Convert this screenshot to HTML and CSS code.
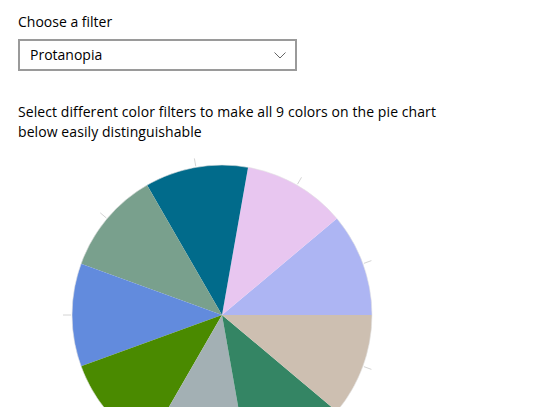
FILE: index.html
```html
<!DOCTYPE html>
<html lang="en">
<head>
<meta charset="utf-8">
<title>Color filters</title>
<link rel="stylesheet" href="styles.css">
</head>
<body>
<main class="page">
  <p class="label">Choose a filter</p>
  <div class="dropdown" role="combobox" aria-expanded="false">
    <span class="dropdown-value">Protanopia</span>
    <svg class="chevron" width="12" height="7" viewBox="0 0 12 7" aria-hidden="true">
      <polyline points="0.5,0.5 6,6 11.5,0.5" fill="none" stroke="#666" stroke-width="1"/>
    </svg>
  </div>
  <p class="desc">Select different color filters to make all 9 colors on the pie chart below easily distinguishable</p>
  <svg class="chart" width="320" height="320" viewBox="0 0 320 320" aria-label="Pie chart with 9 colors">
    <g class="ticks" stroke="#d4d4d4" stroke-width="1">
      <line x1="301.893" y1="108.355" x2="309.411" y2="105.619"/>
      <line x1="235.5" y1="29.229" x2="239.5" y2="22.301"/>
      <line x1="133.779" y1="11.294" x2="132.390" y2="3.415"/>
      <line x1="44.328" y1="62.939" x2="38.200" y2="57.796"/>
      <line x1="9" y1="160" x2="1" y2="160"/>
      <line x1="44.328" y1="257.061" x2="38.200" y2="262.204"/>
      <line x1="133.779" y1="308.706" x2="132.390" y2="316.585"/>
      <line x1="235.5" y1="290.771" x2="239.5" y2="297.699"/>
      <line x1="301.893" y1="211.645" x2="309.411" y2="214.381"/>
    </g>
    <g class="slices">
      <path fill="#adb5f3" d="M160,160 L310,160 A150,150 0 0 0 274.907,63.582 Z"/>
      <path fill="#e8c6f0" d="M160,160 L274.907,63.582 A150,150 0 0 0 186.047,12.279 Z"/>
      <path fill="#016b8b" d="M160,160 L186.047,12.279 A150,150 0 0 0 85,30.096 Z"/>
      <path fill="#79a08d" d="M160,160 L85,30.096 A150,150 0 0 0 19.046,108.697 Z"/>
      <path fill="#628bdd" d="M160,160 L19.046,108.697 A150,150 0 0 0 19.046,211.303 Z"/>
      <path fill="#4a8a00" d="M160,160 L19.046,211.303 A150,150 0 0 0 85,289.904 Z"/>
      <path fill="#a3b0b4" d="M160,160 L85,289.904 A150,150 0 0 0 186.047,307.721 Z"/>
      <path fill="#348564" d="M160,160 L186.047,307.721 A150,150 0 0 0 274.907,256.418 Z"/>
      <path fill="#cdbfb1" d="M160,160 L274.907,256.418 A150,150 0 0 0 310,160 Z"/>
    </g>
    <circle cx="160" cy="160" r="150" fill="none" stroke="#e2e2e2" stroke-width="0.6"/>
  </svg>
</main>
</body>
</html>
```

FILE: styles.css
```css
html, body {
  margin: 0;
  padding: 0;
  background: #ffffff;
  overflow: hidden;
}

body {
  font-family: "Open Sans", "Noto Sans", "Liberation Sans", sans-serif;
  font-size: 14px;
  color: #000000;
}

.page {
  padding: 12px 18px 0;
}

.label {
  margin: 0;
  line-height: 20px;
}

.dropdown {
  margin-top: 7px;
  width: 279px;
  height: 32px;
  box-sizing: border-box;
  border: 2px solid #9a9a9a;
  display: flex;
  align-items: center;
  justify-content: space-between;
  padding: 0 9px 0 10px;
  background: #ffffff;
}

.dropdown-value {
  line-height: 20px;
}

.chevron {
  display: block;
}

.desc {
  margin: 31px 0 0;
  font-size: 14px;
  letter-spacing: 0.08px;
  line-height: 20px;
  max-width: 440px;
}

.chart {
  display: block;
  margin: 13px 0 0 44px;
}
```
